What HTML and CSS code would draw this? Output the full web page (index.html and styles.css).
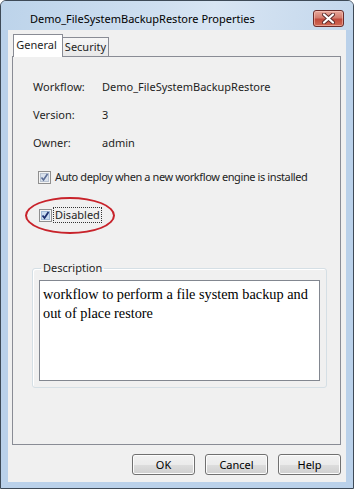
FILE: index.html
```html
<!DOCTYPE html>
<html lang="en">
<head>
  <meta charset="UTF-8" />
  <meta name="viewport" content="width=device-width, initial-scale=1" />
  <title>Demo_FileSystemBackupRestore Properties</title>
  <link rel="stylesheet" href="styles.css">
</head>
<body>

  <div class="window">
    <div class="titlebar">
      <span class="title">Demo_FileSystemBackupRestore Properties</span>
      <button class="close" aria-label="Close">
        <svg width="13" height="11" viewBox="0 0 13 11">
          <path d="M2 1.5 L11 9.5 M11 1.5 L2 9.5" stroke="#5a2a2a" stroke-width="4" stroke-linecap="round"/>
          <path d="M2 1.5 L11 9.5 M11 1.5 L2 9.5" stroke="#ffffff" stroke-width="2.2" stroke-linecap="round"/>
        </svg>
      </button>
    </div>

    <div class="client">
      <div class="tabs">
        <div class="tab active">General</div>
        <div class="tab">Security</div>
      </div>

      <div class="panel">
        <div class="row"><span class="label">Workflow:</span><span>Demo_FileSystemBackupRestore</span></div>
        <div class="row"><span class="label">Version:</span><span>3</span></div>
        <div class="row"><span class="label">Owner:</span><span>admin</span></div>

        <label class="check auto">
          <svg class="box" width="13" height="13" viewBox="0 0 13 13">
            <rect x="0.5" y="0.5" width="12" height="12" fill="#f4f4f4" stroke="#8f8f8f"/>
            <rect x="2.5" y="2.5" width="8" height="8" fill="#d9e1ec" stroke="#b8c3d2"/>
            <path d="M3.5 6.5 L5.5 9 L9.5 3" fill="none" stroke="#5b6d96" stroke-width="1.6"/>
          </svg>
          <span>Auto deploy when a new workflow engine is installed</span>
        </label>

        <div class="marked">
          <label class="check">
            <svg class="box" width="13" height="13" viewBox="0 0 13 13">
              <rect x="0.5" y="0.5" width="12" height="12" fill="#f4f4f4" stroke="#8f8f8f"/>
              <rect x="2.5" y="2.5" width="8" height="8" fill="#c9dcf0" stroke="#9fb8d6"/>
              <path d="M3.5 6.5 L5.5 9 L9.5 3" fill="none" stroke="#1c2f6e" stroke-width="1.8"/>
            </svg>
            <span class="focus">Disabled</span>
          </label>
          <span class="ring"></span>
        </div>

        <fieldset class="group">
          <legend>Description</legend>
          <div class="textbox">workflow to perform a file system backup and out of place restore</div>
        </fieldset>
      </div>

      <div class="buttons">
        <button class="btn">OK</button>
        <button class="btn">Cancel</button>
        <button class="btn">Help</button>
      </div>
    </div>
  </div>

</body>
</html>
```

FILE: styles.css
```css
* {
  box-sizing: border-box;
}

body {
  margin: 0;
  font-family: "Noto Sans", "Open Sans", sans-serif;
  font-size: 11px;
  color: #1e1e1e;
  background: white;
}

.window {
  width: 354px;
  height: 489px;
  border: 1px solid #3e4a57;
  border-radius: 6px 6px 0 0;
  background: #bad1ea;
  display: flex;
  flex-direction: column;
}

.titlebar {
  height: 29px;
  display: flex;
  align-items: center;
  padding: 6px 9px 0 29px;
  border-radius: 5px 5px 0 0;
  background: linear-gradient(100deg, #bcd3ea 0%, #cfdff0 45%, #d8e5f3 60%, #c3d7ec 100%);
}

.title {
  flex: 1;
  color: #000;
  font-size: 11px;
  white-space: nowrap;
}

.close {
  width: 31px;
  height: 17px;
  margin-top: -1px;
  padding: 0;
  border: 1px solid #6b2c2a;
  border-radius: 3px;
  background: linear-gradient(#e8a89c 0%, #d37c6e 45%, #c14a3c 55%, #d06a55 100%);
  box-shadow: inset 0 0 0 1px rgba(255, 210, 200, 0.5);
  display: flex;
  align-items: center;
  justify-content: center;
}

.client {
  flex: 1;
  margin: 0 7px 6px 7px;
  padding: 4px 5px 0 4px;
  background: #f0f0f0;
  display: flex;
  flex-direction: column;
}

.tabs {
  display: flex;
  align-items: flex-end;
  padding-left: 1px;
  height: 22px;
}

.tab {
  width: 47px;
  height: 19px;
  margin-left: -1px;
  border: 1px solid #898c95;
  border-bottom: none;
  background: linear-gradient(#f6f6f6, #e8e8e8);
  text-align: center;
  line-height: 18px;
}

.tab.active {
  width: 50px;
  height: 23px;
  margin-left: 0;
  margin-bottom: -1px;
  position: relative;
  z-index: 1;
  background: #ffffff;
  line-height: 20px;
  padding-right: 3px;
}

.panel {
  flex: 1;
  border: 1px solid #898c95;
  background: #f0f0f0;
  padding: 22px 0 0 20px;
  display: flex;
  flex-direction: column;
}

.row {
  display: flex;
  height: 16px;
  line-height: 16px;
  margin-bottom: 12px;
}

.label {
  width: 69px;
}

.check {
  display: flex;
  align-items: center;
  height: 16px;
  line-height: 16px;
  gap: 4px;
  margin-left: 5px;
  white-space: nowrap;
}

.auto {
  margin-top: 6px;
}

.auto span {
  letter-spacing: -0.4px;
}

.marked {
  position: relative;
  margin-top: 22px;
}

.marked .check {
  margin-left: 6px;
  gap: 1px;
}

.focus {
  border: 1px dotted #333;
  padding: 0 1px;
  line-height: 14px;
}

.ring {
  position: absolute;
  left: -8px;
  top: -10px;
  width: 90px;
  height: 37px;
  border: 2px solid #c8232b;
  border-radius: 50%;
}

.group {
  margin: 37px 13px 0 -1px;
  padding: 4px 6px 6px 6px;
  border: 1px solid #d5dfe5;
  border-radius: 3px;
  box-shadow: inset 1px 1px 0 #fff;
}

.group legend {
  padding: 0 2px;
  margin-left: 2px;
  line-height: 16px;
}

.textbox {
  height: 101px;
  border: 1px solid #828790;
  background: #ffffff;
  padding: 4px 3px;
  font-family: "Liberation Serif", serif;
  font-size: 14.3px;
  line-height: 19px;
  color: #000;
}

.buttons {
  display: flex;
  justify-content: flex-end;
  gap: 10px;
  margin: 9px 0 7px 0;
}

.btn {
  width: 63px;
  height: 21px;
  padding: 0;
  border: 1px solid #707070;
  border-radius: 3px;
  background: linear-gradient(#f2f2f2 0%, #ebebeb 50%, #dddddd 51%, #cfcfcf 100%);
  box-shadow: inset 0 0 0 1px #fcfcfc;
  font-family: "Noto Sans", "Open Sans", sans-serif;
  font-size: 11px;
  color: #000;
}
```
